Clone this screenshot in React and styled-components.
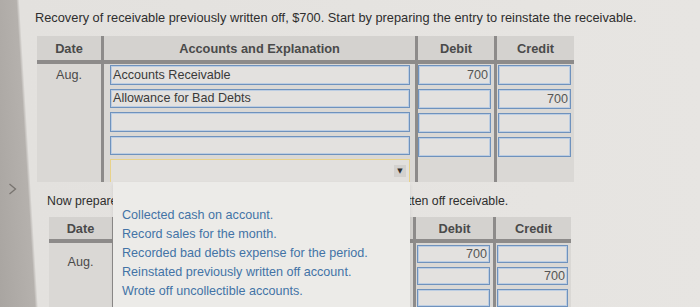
import React from "react";
import styled, { createGlobalStyle } from "styled-components";

const GlobalStyle = createGlobalStyle`
  html, body {
    margin: 0;
    padding: 0;
  }
  body {
    width: 700px;
    height: 307px;
    overflow: hidden;
    font-family: "Liberation Sans", Arial, sans-serif;
    background: #e5e3e0;
  }
`;

const Page = styled.div`
  display: flex;
  height: 307px;
  overflow: hidden;
  background: linear-gradient(86.5deg, #a9a5a1 0, #b5b1ad 35px, #e3e1de 38px, #e7e5e2 100%);
`;

const SideStrip = styled.div`
  width: 28px;
  flex-shrink: 0;
  box-sizing: border-box;
  padding-top: 181px;
  padding-left: 8px;
`;

const Main = styled.div`
  flex: 1;
  padding: 11px 0 0 7px;
  position: relative;
`;

const Prompt = styled.div`
  font-size: ${(p) => p.$size || 12.8}px;
  line-height: 14px;
  color: #2e2e2e;
  white-space: nowrap;
  margin: ${(p) => p.$margin || "0"};
`;

const Journal = styled.div`
  display: grid;
  grid-template-columns: ${(p) => p.$cols};
  margin: ${(p) => p.$margin};
  width: max-content;
`;

const Column = styled.div`
  display: flex;
  flex-direction: column;
  box-sizing: border-box;
  border-left: ${(p) => (p.$first ? "none" : "3px solid #8d8b8a")};
  position: relative;
`;

const HeadCell = styled.div`
  height: ${(p) => p.$h}px;
  background: #d4d2cf;
  border-bottom: 4px solid #8d8b8a;
  display: flex;
  align-items: center;
  justify-content: center;
  font-size: 12.8px;
  font-weight: 700;
  color: #4a4a4a;
`;

const Body = styled.div`
  height: ${(p) => p.$h}px;
  background: #dad8d5;
  display: flex;
  flex-direction: column;
  gap: ${(p) => p.$gap}px;
  padding: ${(p) => p.$pad};
  box-sizing: border-box;
  position: relative;
`;

const DateText = styled.div`
  height: ${(p) => p.$h}px;
  display: flex;
  align-items: center;
  justify-content: center;
  font-size: 12.6px;
  color: #4a4a4a;
  padding-top: ${(p) => p.$shift || 0}px;
`;

const Field = styled.div`
  height: ${(p) => p.$h}px;
  box-sizing: border-box;
  border: 1px solid #6f92bd;
  box-shadow: inset 0 0 0 1px #bccde2;
  background: #e3e1df;
  display: flex;
  align-items: center;
  justify-content: ${(p) => (p.$num ? "flex-end" : "flex-start")};
  padding: 0 2px;
  font-size: 12.6px;
  color: ${(p) => (p.$num ? "#555" : "#3a3a3a")};
  white-space: nowrap;
  overflow: hidden;
`;

const Select = styled.div`
  height: 23px;
  box-sizing: border-box;
  border: 1px solid #e8d28a;
  border-bottom: none;
  background: #e2e0dd;
  display: flex;
  align-items: center;
  justify-content: flex-end;
  padding-right: 3px;
  position: relative;
`;

const Arrow = styled.span`
  width: 12px;
  height: 12px;
  background: #d3d1ce;
  display: flex;
  align-items: center;
  justify-content: center;
  font-size: 7px;
  color: #333;
  font-family: "DejaVu Sans", sans-serif;
`;

const Options = styled.ul`
  position: absolute;
  top: 100%;
  left: 2px;
  width: 297px;
  height: 140px;
  margin: 0;
  padding: 5px 0 0;
  list-style: none;
  background: #ecebe8;
  box-shadow: 0 2px 4px rgba(0, 0, 0, 0.08);
  z-index: 10;
`;

const Option = styled.li`
  height: 19px;
  line-height: 19px;
  padding-left: 9px;
  font-size: 12.6px;
  color: #4373a6;
  white-space: nowrap;
`;

const options = [
  "",
  "Collected cash on account.",
  "Record sales for the month.",
  "Recorded bad debts expense for the period.",
  "Reinstated previously written off account.",
  "Wrote off uncollectible accounts.",
];

function App() {
  return (
    <>
      <GlobalStyle />
      <Page>
        <SideStrip>
          <svg width="9" height="12" viewBox="0 0 9 12">
            <path d="M1.5 1 L7.5 6 L1.5 11" fill="none" stroke="#77736f" strokeWidth="1.3" />
          </svg>
        </SideStrip>
        <Main>
          <Prompt>
            Recovery of receivable previously written off, $700. Start by preparing the entry to reinstate the receivable.
          </Prompt>

          <Journal $cols="64px 314px 79px 80px" $margin="11px 0 0 2px">
            <Column $first>
              <HeadCell $h={24}>Date</HeadCell>
              <Body $h={118} $gap={4} $pad="1px 0 0">
                <DateText $h={20}>Aug.</DateText>
              </Body>
            </Column>
            <Column>
              <HeadCell $h={24}>Accounts and Explanation</HeadCell>
              <Body $h={118} $gap={4} $pad="1px 5px 0 6px">
                <Field $h={20}>Accounts Receivable</Field>
                <Field $h={20}>Allowance for Bad Debts</Field>
                <Field $h={20} />
                <Field $h={20} />
                <Select>
                  <Arrow>▼</Arrow>
                  <Options>
                    {options.map((o, i) => (
                      <Option key={i}>{o}</Option>
                    ))}
                  </Options>
                </Select>
              </Body>
            </Column>
            <Column>
              <HeadCell $h={24}>Debit</HeadCell>
              <Body $h={118} $gap={4} $pad="1px 3px 0 0">
                <Field $h={20} $num>700</Field>
                <Field $h={20} $num />
                <Field $h={20} $num />
                <Field $h={20} $num />
              </Body>
            </Column>
            <Column>
              <HeadCell $h={24}>Credit</HeadCell>
              <Body $h={118} $gap={4} $pad="1px 3px 0 1px">
                <Field $h={20} $num />
                <Field $h={20} $num>700</Field>
                <Field $h={20} $num />
                <Field $h={20} $num />
              </Body>
            </Column>
          </Journal>

          <Prompt $size={12.3} $margin="12px 0 0 12px">
            Now prepare the entry to record the collection of the previously written off receivable.
          </Prompt>

          <Journal $cols="63px 301px 80px 78px" $margin="9px 0 0 14px">
            <Column $first>
              <HeadCell $h={22}>Date</HeadCell>
              <Body $h={80} $gap={4} $pad="2px 0 0">
                <DateText $h={18} $shift={8}>Aug.</DateText>
              </Body>
            </Column>
            <Column>
              <HeadCell $h={22} />
              <Body $h={80} $gap={4} $pad="2px 5px 0 6px">
                <Field $h={18} />
                <Field $h={18} />
                <Field $h={18} />
              </Body>
            </Column>
            <Column>
              <HeadCell $h={22}>Debit</HeadCell>
              <Body $h={80} $gap={4} $pad="2px 3px 0 1px">
                <Field $h={18} $num>700</Field>
                <Field $h={18} $num />
                <Field $h={18} $num />
              </Body>
            </Column>
            <Column>
              <HeadCell $h={22}>Credit</HeadCell>
              <Body $h={80} $gap={4} $pad="2px 3px 0 1px">
                <Field $h={18} $num />
                <Field $h={18} $num>700</Field>
                <Field $h={18} $num />
              </Body>
            </Column>
          </Journal>
        </Main>
      </Page>
    </>
  );
}

export default App;
